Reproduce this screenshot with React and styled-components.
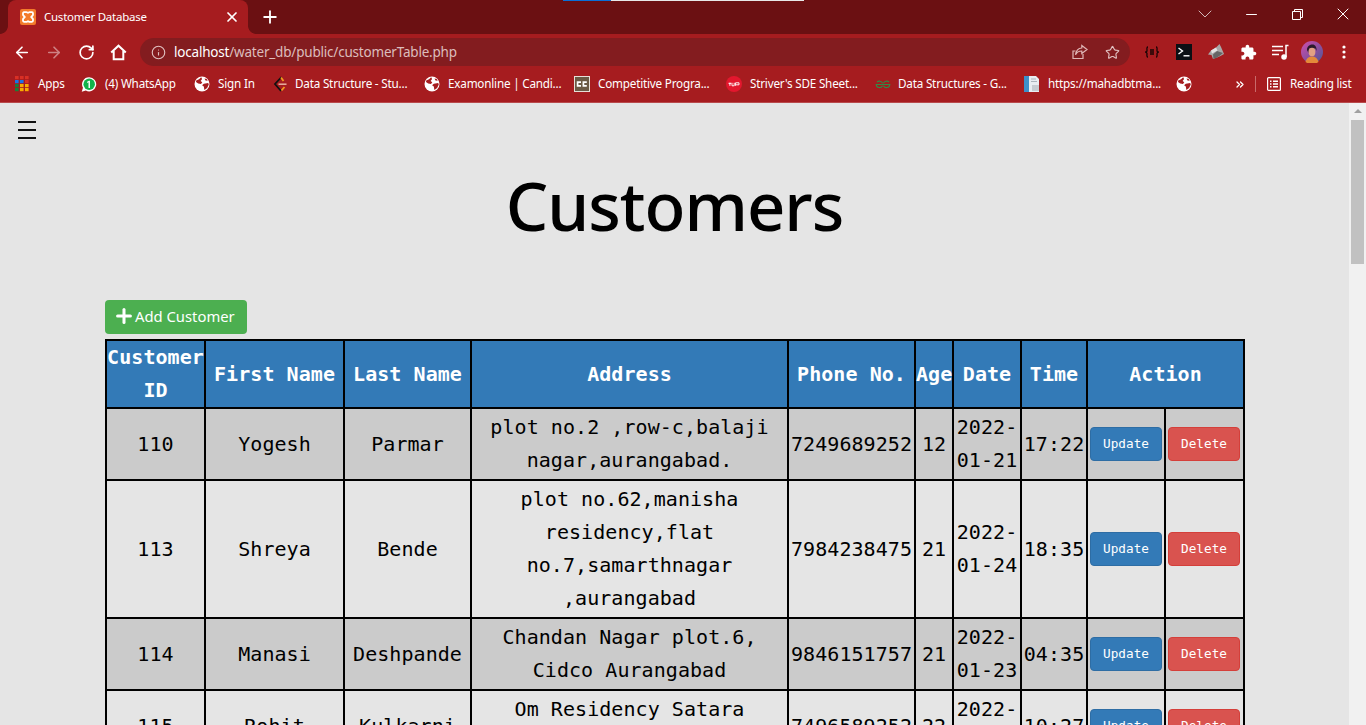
import React from "react";
import styled, { createGlobalStyle } from "styled-components";
import { ArrowLeft, ArrowRight, RotateCw, Info, Star, ChevronDown, Minus, X, Plus, ChevronsRight } from "lucide-react";

const Global = createGlobalStyle`
  html, body { margin: 0; padding: 0; height: 725px; overflow: hidden; background: #e5e5e5; }
  * { box-sizing: border-box; }
`;

const UI = `"Noto Sans", "Open Sans", sans-serif`;
const MONO = `"DejaVu Sans Mono", "Liberation Mono", monospace`;
const FRAME = "#6b1012";
const BAR = "#a61c1f";

const Shell = styled.div`
  width: 1366px; height: 725px; display: flex; flex-direction: column; overflow: hidden;
`;
const TabStrip = styled.div`
  position: relative; height: 34px; flex: none; background: ${FRAME}; display: flex; align-items: flex-end; padding-left: 8px;
`;
const LoadLine = styled.div`
  position: absolute; top: 0; left: 563px; width: 241px; height: 1px;
  background: linear-gradient(to right, #0a6fd6 0 48px, #e8e8e8 48px);
`;
const Tab = styled.div`
  position: relative; width: 240px; height: 34px; background: ${BAR}; border-radius: 8px 8px 0 0;
  display: flex; align-items: center; padding-left: 12px; color: #fff; font: 11.5px ${UI}; letter-spacing: -0.25px;
  &::before, &::after { content: ""; position: absolute; bottom: 0; width: 8px; height: 8px; }
  &::before { left: -8px; background: radial-gradient(circle at 0 0, ${FRAME} 7.5px, ${BAR} 8.2px); }
  &::after { right: -8px; background: radial-gradient(circle at 100% 0, ${FRAME} 7.5px, ${BAR} 8.2px); }
`;
const TabTitle = styled.span`
  margin-left: 8px; flex: 1; white-space: nowrap; padding-bottom: 1px;
`;
const TabClose = styled.span`
  display: flex; margin-right: 8px;
`;
const NewTab = styled.span`
  display: flex; margin: 0 0 0 12px; align-self: center;
`;
const WindowControls = styled.div`
  margin-left: auto; align-self: stretch; display: flex; align-items: flex-start; padding-top: 6px; color: #fff;
`;
const WinButton = styled.span`
  width: 46px; height: 16px; display: flex; align-items: center; justify-content: center; opacity: ${p => p.$dim ? 0.7 : 1};
`;
const Toolbar = styled.div`
  height: 32px; flex: none; background: ${BAR}; display: flex; align-items: center; color: #fff; padding-top: 4px;
`;
const Slot = styled.span`
  display: flex; align-items: center; justify-content: center; flex: none; width: ${p => p.$w}px; margin-left: ${p => p.$ml}px; opacity: ${p => p.$dim ? 0.45 : 1};
`;
const Omnibox = styled.div`
  width: 990px; height: 28px; margin-left: 13px; background: #831c1f; border-radius: 14px; display: flex; align-items: center; flex: none;
`;
const Url = styled.div`
  margin-left: 8px; flex: 1; font: 13.5px ${UI}; color: #dcbcbc; white-space: nowrap; letter-spacing: -0.2px;
  b { font-weight: 400; color: #fff; }
`;
const Bookmarks = styled.div`
  height: 37px; flex: none; background: ${BAR}; border-bottom: 1px solid #b84a4c; display: flex; align-items: center; color: #fff; font: 11.7px ${UI};
`;
const Mark = styled.div`
  display: flex; align-items: center; flex: none; margin-left: ${p => p.$ml}px;
`;
const MarkIcon = styled.span`
  display: flex; width: 16px; height: 16px; align-items: center; justify-content: center; flex: none;
`;
const MarkLabel = styled.span`
  margin-left: ${p => p.$gap ?? 8}px; width: ${p => p.$w}px; white-space: nowrap; letter-spacing: -0.2px; padding-bottom: 2px;
`;
const Divider = styled.span`
  width: 1px; height: 16px; margin-left: 9px; background: #c86a6a; flex: none;
`;
const PageArea = styled.div`
  flex: 1; min-height: 0; display: flex; background: #e5e5e5;
`;
const Main = styled.main`
  width: 1349px; flex: none; overflow: hidden; padding-left: 0;
`;
const Scrollbar = styled.div`
  width: 17px; flex: none; background: #f1f1f1; display: flex; flex-direction: column; align-items: center; padding-top: 6px;
`;
const ScrollArrow = styled.span`
  width: 0; height: 0; border-left: 4px solid transparent; border-right: 4px solid transparent; border-bottom: 4px solid #a0a0a0; margin-bottom: 7px; flex: none;
`;
const ScrollThumb = styled.div`
  width: 13px; height: 144px; background: #c1c1c1; flex: none;
`;
const Burger = styled.div`
  margin: 18px 0 0 18px; width: 18px; height: 18px; display: flex; flex-direction: column; justify-content: space-between; padding: 0;
`;
const BurgerLine = styled.span`
  display: block; height: 2px; background: #111;
`;
const Title = styled.h1`
  margin: 21px 0 0; height: 90px; font: 500 67px/90px ${UI}; color: #000; text-align: center; letter-spacing: -1px;
`;
const Content = styled.div`
  padding-left: 105px; margin-top: 50px;
`;
const AddButton = styled.button`
  display: flex; align-items: center; height: 34px; width: 142px; padding: 0 0 2px 8px; background: #4caf50; border: 0; border-radius: 4px; color: #fff; font: 14.8px ${UI}; margin-bottom: 5px;
`;
const Table = styled.table`
  width: 1140px; table-layout: fixed; border-collapse: collapse; font: 20px/33px ${MONO}; color: #000; letter-spacing: 0.06px;
`;
const Head = styled.th`
  padding: 0; height: 68px; background: #337ab7; color: #fff; border: 2px solid #000; font-weight: 700; text-align: center; vertical-align: middle;
`;
const Row = styled.tr`
  background: ${p => p.$alt ? "#cbcbcb" : "#e5e5e5"};
`;
const Cell = styled.td`
  padding: 2px 0; border: 2px solid #000; text-align: center; vertical-align: middle;
`;
const ActionButton = styled.button`
  display: block; margin: 0 0 0 2px; width: 72px; height: 34px; padding: 0 0 2px; border-radius: 4px; color: #fff; font: 12.7px ${MONO};
  background: ${p => p.$danger ? "#d9534f" : "#337ab7"}; border: 1px solid ${p => p.$danger ? "#d43f3a" : "#2e6da4"};
`;

const Globe = () => (
  <svg width="16" height="16" viewBox="0 0 16 16">
    <circle cx="8" cy="8" r="7.5" fill="#fff" />
    <path d="M2.2 4.4 5 3.2l2.2-1.9.9 1.6L6.6 5l1.7 1.3L7 8 4.2 7.6 2 6Zm7.6 3.4 4.4-.9.6 1.5-1.7 3.6-2.7 2-.6-3.4-1.7-1.4Zm.7-5.4 2.2.6 1 1.8-2.2-.2Z" fill={BAR} />
  </svg>
);

const Xampp = () => (
  <svg width="16" height="16" viewBox="0 0 16 16">
    <rect width="16" height="16" rx="2" fill="#f37b2b" />
    <path d="M4 3.2h2.4c.7 0 1.1.7 1.6.7s.9-.7 1.6-.7H12c.7 0 1 .5 1 1.2v1.3c0 .9-1.2 1.3-1.8 2.3.6 1 1.8 1.4 1.8 2.3v1.3c0 .7-.3 1.2-1 1.2H9.6c-.7 0-1.1-.7-1.6-.7s-.9.7-1.6.7H4c-.7 0-1-.5-1-1.2v-1.3c0-.9 1.2-1.3 1.8-2.3C4.2 7 3 6.600 3 5.700V4.400c0-.7.3-1.200 1-1.200Z" fill="none" stroke="#fff" strokeWidth="1.8" />
  </svg>
);

const AppsGrid = () => {
  const colors = ["#d93025", "#d93025", "#d93025", "#1a73e8", "#1a73e8", "#d93025", "#188038", "#f9ab00", "#f9ab00", "#188038", "#f9ab00", "#f9ab00"];
  return (
    <svg width="14" height="16" viewBox="0 0 14 16">
      {colors.map((c, i) => <rect key={i} x={(i % 3) * 5} y={Math.floor(i / 3) * 4} width="3.600" height="3.200" fill={c} />)}
    </svg>
  );
};

const WhatsApp = () => (
  <svg width="17" height="17" viewBox="0 0 17 17">
    <path d="M8.700.8a7.500 7.500 0 1 1-3.600 14.100L.8 16.200l1.300-4.200A7.500 7.500 0 0 1 8.700.8Z" fill="#fff" />
    <circle cx="8.700" cy="8.300" r="6.100" fill="#12b24a" />
    <path d="M9.500 4.400v7.800H8V6.200L6.500 6.900V5.600l2-1.200Z" fill="#fff" />
  </svg>
);

const DsIcon = () => (
  <svg width="16" height="16" viewBox="0 0 16 16" fill="none">
    <path d="M9.500 1 3 8l6 7" stroke="#111" strokeWidth="1.800" />
    <path d="M9 1.500 11.500 5M9.500 14.500 12.500 11" stroke="#f39a1e" strokeWidth="1.800" />
    <path d="M6.500 8.200h8" stroke="#e8b0a0" strokeWidth="1.500" />
  </svg>
);

const CcIcon = () => (
  <svg width="16" height="16" viewBox="0 0 16 16">
    <rect width="16" height="16" fill="#e6e0d8" />
    <rect x="1" y="1" width="14" height="14" fill="#6b5a45" />
    <path d="M7 6.200H3.600v3.600H7M12.800 6.200H9.400v3.600h3.400" fill="none" stroke="#fff" strokeWidth="1.700" />
  </svg>
);

const TufIcon = () => (
  <svg width="16" height="16" viewBox="0 0 16 16">
    <circle cx="8" cy="8" r="8" fill="#e3172e" />
    <rect x="2.500" y="6.800" width="2.800" height="1" fill="#fff" />
    <rect x="3.400" y="6.800" width="1" height="3" fill="#fff" />
    <path d="M6 6.800v3h2.200v-3" fill="none" stroke="#fff" strokeWidth=".9" />
    <path d="M9.500 9.800v-3h3.500v2H10" fill="none" stroke="#fff" strokeWidth=".9" />
  </svg>
);

const GfgIcon = () => (
  <svg width="16" height="16" viewBox="0 0 16 16" fill="none" stroke="#2f8d46" strokeWidth="1.100">
    <path d="M8 8.500H1.200a3.300 3.300 0 0 0 6.300 1.200M8 8.500h6.800a3.300 3.300 0 0 1-6.300 1.200" />
    <path d="M7.500 7.200A3.300 3.300 0 0 0 2 6.200M8.500 7.200a3.300 3.300 0 0 1 5.500-1" />
  </svg>
);

const DocIcon = () => (
  <svg width="16" height="16" viewBox="0 0 16 16">
    <path d="M0 0h6v16H0Z" fill="#3d8fc9" />
    <path d="M5 0h7l3 3v13H5Z" fill="#e8edf2" />
    <path d="M8 9h7v6H8Z" fill="#c6ccd2" />
    <path d="M7 3h5M7 5.500h6" stroke="#aab4bd" strokeWidth="1" />
  </svg>
);

const House = () => (
  <svg width="17" height="17" viewBox="0 0 17 17" fill="none" stroke="#fff" strokeWidth="2">
    <path d="M1.200 8.500 8.500 1.700l7.300 6.800M3.700 7v8.300h9.600V7" />
  </svg>
);

const ShareBox = () => (
  <svg width="16" height="16" viewBox="0 0 16 16" fill="none" stroke="#e0b6b6" strokeWidth="1.200">
    <path d="M11 10v4.500H1V7h2.500" />
    <path d="M9.800 1.500 15 5.500 9.800 9.500V7c-3 0-5 1.200-6.300 3.800C4 7 6 4.200 9.800 4Z" />
  </svg>
);

const Braces = () => (
  <svg width="14" height="12" viewBox="0 0 14 12" fill="none" stroke="#1a0505" strokeWidth="1.300">
    <path d="M3 1C1.500 1 2 3 2 4.500S1 6 .5 6 2 6.500 2 7.500 1.500 11 3 11M11 1c1.500 0 1 2 1 3.500s1 1.500 1.500 1.500-1.500.5-1.500 1.500.5 3.500-1 3.500" />
    <path d="M5 4h4M5 6h4M5 8h4" />
  </svg>
);

const Terminal = () => (
  <svg width="16" height="16" viewBox="0 0 16 16">
    <rect width="16" height="16" fill="#0b0f14" />
    <path d="m2.500 4 4 3-4 3" fill="none" stroke="#fff" strokeWidth="1.400" />
    <path d="M7.500 11.800h6" stroke="#fff" strokeWidth="1.400" />
  </svg>
);

const Wing = () => (
  <svg width="16" height="16" viewBox="0 0 16 16">
    <path d="M11.500 0 8 3.500 3 6.500 0 10.500l3.500.5 1.500 4L9 13.500l3.500-1.500L16 10l-1.500-3.500L13 3Z" fill="#a8a8a8" />
    <path d="M5 10.500 9 7l6 2-3 2.500-3 2-3.500 1.500Z" fill="#666" />
    <path d="M3 6.500 8 3.500l1.500 3-5.500 3Z" fill="#e4e4e4" />
  </svg>
);

const PuzzleSolid = () => (
  <svg width="17" height="17" viewBox="0 0 24 24" fill="#fff">
    <path d="M20.500 11H19V7c0-1.100-.9-2-2-2h-4V3.500C13 2.120 11.880 1 10.500 1S8 2.120 8 3.500V5H4c-1.100 0-1.990.9-1.990 2v3.800H3.500c1.490 0 2.700 1.210 2.700 2.700s-1.210 2.700-2.700 2.700H2V20c0 1.100.9 2 2 2h3.800v-1.500c0-1.490 1.210-2.700 2.700-2.700 1.490 0 2.700 1.210 2.700 2.700V22H17c1.100 0 2-.9 2-2v-4h1.500c1.380 0 2.500-1.120 2.500-2.500S21.880 11 20.500 11z" />
  </svg>
);

const MediaQueue = () => (
  <svg width="17" height="16" viewBox="0 0 17 16" fill="none" stroke="#fff" strokeWidth="1.500">
    <path d="M0 2.500h11M0 6.500h11M0 10.500h7" />
    <path d="M14 13V1.500h2.500" />
    <circle cx="12" cy="13" r="2" fill="#fff" />
  </svg>
);

const Avatar = () => (
  <svg width="22" height="22" viewBox="0 0 22 22">
    <defs>
      <linearGradient id="avBg" x1="0" y1="0" x2="1" y2="1">
        <stop offset="0" stopColor="#d04fae" />
        <stop offset=".55" stopColor="#8a4f9e" />
        <stop offset="1" stopColor="#4a5a94" />
      </linearGradient>
    </defs>
    <circle cx="11" cy="11" r="11" fill="url(#avBg)" />
    <path d="M6 9c0-4 3-5.500 5.500-5.500S16 6 15.500 10l-1-2.500L8 7.500 7.500 12Z" fill="#2a1a2a" />
    <ellipse cx="11" cy="11" rx="3.400" ry="4.200" fill="#e2a183" />
    <path d="M4.500 21c1-4 3.500-5.500 6.500-5.500s5.500 1.500 6.500 5.500a11 11 0 0 1-13 0Z" fill="#e48a3a" />
  </svg>
);

const Dots = () => (
  <svg width="4" height="14" viewBox="0 0 4 14" fill="#fff">
    <circle cx="2" cy="2" r="1.600" />
    <circle cx="2" cy="7" r="1.600" />
    <circle cx="2" cy="12" r="1.600" />
  </svg>
);

const Restore = () => (
  <svg width="11" height="11" viewBox="0 0 11 11" fill="none" stroke="#fff" strokeWidth="1">
    <path d="M.5 2.500h8v8h-8zM2.500 2.500v-2h8v8h-2" />
  </svg>
);

const ReadingList = () => (
  <svg width="14" height="14" viewBox="0 0 14 14" fill="none" stroke="#fff" strokeWidth="1.200">
    <rect x=".6" y=".6" width="12.800" height="12.800" rx="1" />
    <path d="M3 4.200h1.500M6 4.200h5M3 7h1.500M6 7h5M3 9.800h1.500M6 9.800h5" strokeWidth="1.400" />
  </svg>
);

const bookmarks = [
  { icon: <AppsGrid />, label: "Apps", w: 27, ml: 14, gap: 8 },
  { icon: <WhatsApp />, label: "(4) WhatsApp", w: 72, ml: 16, gap: 8 },
  { icon: <Globe />, label: "Sign In", w: 36, ml: 17, gap: 8 },
  { icon: <DsIcon />, label: "Data Structure - Stu...", w: 113, ml: 18, gap: 7 },
  { icon: <Globe />, label: "Examonline | Candi...", w: 110, ml: 16, gap: 8 },
  { icon: <CcIcon />, label: "Competitive Progra...", w: 111, ml: 16, gap: 8 },
  { icon: <TufIcon />, label: "Striver's SDE Sheet...", w: 108, ml: 17, gap: 8 },
  { icon: <GfgIcon />, label: "Data Structures - G...", w: 110, ml: 17, gap: 7 },
  { icon: <DocIcon />, label: "https://mahadbtma...", w: 112, ml: 16, gap: 8 },
];

const rows = [
  ["110", "Yogesh", "Parmar", "plot no.2 ,row-c,balaji nagar,aurangabad.", "7249689252", "12", "2022-01-21", "17:22"],
  ["113", "Shreya", "Bende", "plot no.62,manisha residency,flat no.7,samarthnagar ,aurangabad", "7984238475", "21", "2022-01-24", "18:35"],
  ["114", "Manasi", "Deshpande", "Chandan Nagar plot.6, Cidco Aurangabad", "9846151757", "21", "2022-01-23", "04:35"],
  ["115", "Rohit", "Kulkarni", "Om Residency Satara Parisar, Aurangabad", "7496589252", "22", "2022-01-25", "10:27"],
];

const colWidths = [99, 139, 127, 317, 127, 38, 68, 66, 78, 79];
const Col = styled.col`
  width: ${p => p.$w}px;
`;

export default function App() {
  return (
    <Shell>
      <Global />
      <TabStrip>
        <LoadLine />
        <Tab>
          <Xampp />
          <TabTitle>Customer Database</TabTitle>
          <TabClose><X size={16} strokeWidth={2.6} /></TabClose>
        </Tab>
        <NewTab><Plus size={20} color="#fff" strokeWidth={2.2} /></NewTab>
        <WindowControls>
          <WinButton $dim><ChevronDown size={24} strokeWidth={1} /></WinButton>
          <WinButton><Minus size={17} strokeWidth={1.4} /></WinButton>
          <WinButton><Restore /></WinButton>
          <WinButton><X size={20} strokeWidth={1.2} /></WinButton>
        </WindowControls>
      </TabStrip>
      <Toolbar>
        <Slot $w={18} $ml={13}><ArrowLeft size={19} strokeWidth={2.2} /></Slot>
        <Slot $w={18} $ml={14} $dim><ArrowRight size={19} strokeWidth={2.2} /></Slot>
        <Slot $w={18} $ml={14}><RotateCw size={17} strokeWidth={2.4} /></Slot>
        <Slot $w={18} $ml={14}><House /></Slot>
        <Omnibox>
          <Slot $w={16} $ml={10}><Info size={15} color="#e0c0c0" strokeWidth={1.8} /></Slot>
          <Url><b>localhost</b>/water_db/public/customerTable.php</Url>
          <Slot $w={16} $ml={0}><ShareBox /></Slot>
          <Slot $w={16} $ml={16}><Star size={15} color="#e0c0c0" strokeWidth={1.8} /></Slot>
          <Slot $w={10} $ml={0} />
        </Omnibox>
        <Slot $w={16} $ml={14}><Braces /></Slot>
        <Slot $w={16} $ml={16}><Terminal /></Slot>
        <Slot $w={16} $ml={16}><Wing /></Slot>
        <Slot $w={17} $ml={16}><PuzzleSolid /></Slot>
        <Slot $w={17} $ml={15}><MediaQueue /></Slot>
        <Slot $w={22} $ml={12}><Avatar /></Slot>
        <Slot $w={4} $ml={19}><Dots /></Slot>
      </Toolbar>
      <Bookmarks>
        {bookmarks.map(b => (
          <Mark key={b.label} $ml={b.ml}>
            <MarkIcon>{b.icon}</MarkIcon>
            <MarkLabel $w={b.w} $gap={b.gap}>{b.label}</MarkLabel>
          </Mark>
        ))}
        <Mark $ml={16}><MarkIcon><Globe /></MarkIcon></Mark>
        <Slot $w={12} $ml={42}><ChevronsRight size={13} strokeWidth={2.6} /></Slot>
        <Divider />
        <Mark $ml={10}>
          <MarkIcon><ReadingList /></MarkIcon>
          <MarkLabel $w={61} $gap={8}>Reading list</MarkLabel>
        </Mark>
      </Bookmarks>
      <PageArea>
        <Main>
          <Burger><BurgerLine /><BurgerLine /><BurgerLine /></Burger>
          <Title>Customers</Title>
          <Content>
            <AddButton><Plus size={22} strokeWidth={3.3} />Add Customer</AddButton>
            <Table>
              <colgroup>
                {colWidths.map((w, i) => <Col key={i} $w={w} />)}
              </colgroup>
              <thead>
                <tr>
                  <Head>Customer ID</Head>
                  <Head>First Name</Head>
                  <Head>Last Name</Head>
                  <Head>Address</Head>
                  <Head>Phone No.</Head>
                  <Head>Age</Head>
                  <Head>Date</Head>
                  <Head>Time</Head>
                  <Head colSpan={2}>Action</Head>
                </tr>
              </thead>
              <tbody>
                {rows.map((r, i) => (
                  <Row key={r[0]} $alt={i % 2 === 0}>
                    {r.map((v, j) => <Cell key={j}>{v}</Cell>)}
                    <Cell><ActionButton>Update</ActionButton></Cell>
                    <Cell><ActionButton $danger>Delete</ActionButton></Cell>
                  </Row>
                ))}
              </tbody>
            </Table>
          </Content>
        </Main>
        <Scrollbar><ScrollArrow /><ScrollThumb /></Scrollbar>
      </PageArea>
    </Shell>
  );
}
